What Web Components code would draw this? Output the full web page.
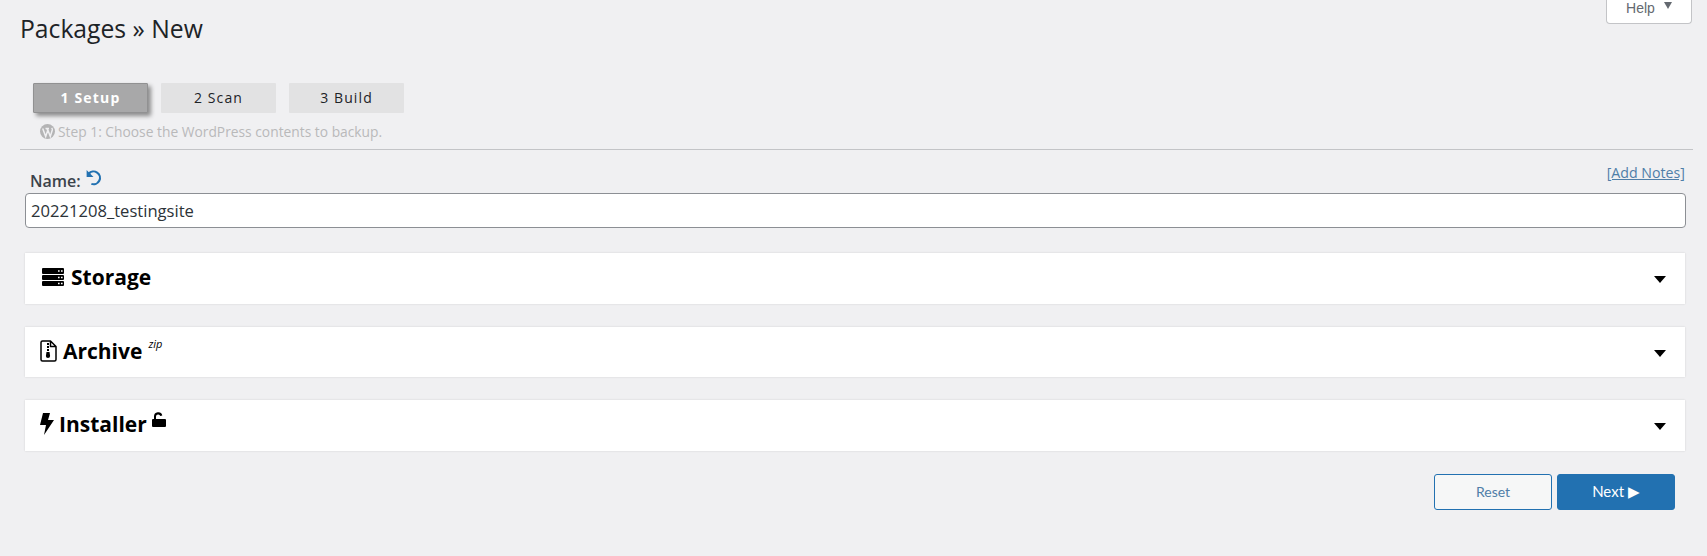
<!DOCTYPE html>
<html>
<head>
<meta charset="utf-8">
<title>Packages New</title>
<style>
  html, body { margin: 0; background: #f0f0f2; }
  body { font-family: "Open Sans", "Liberation Sans", sans-serif; color: #2c3338; }
</style>
</head>
<body>
<dup-page>
  <help-tab></help-tab>
  <page-title>Packages » New</page-title>
  <step-bar note="Step 1: Choose the WordPress contents to backup.">
    <step-item active>1 Setup</step-item>
    <step-item>2 Scan</step-item>
    <step-item>3 Build</step-item>
  </step-bar>
  <name-field value="20221208_testingsite"></name-field>
  <box-panel>
    <svg slot="icon" style="margin:0 7px 0 17px" width="22" height="20" viewBox="0 0 22 20"><path fill="#000" fill-rule="evenodd" d="M1 1h20a1 1 0 0 1 1 1v4a1 1 0 0 1-1 1H1a1 1 0 0 1-1-1V2a1 1 0 0 1 1-1zm15 2.2v1.6h1.6V3.200zm3 0v1.600h1.600V3.200zM1 8h20a1 1 0 0 1 1 1v3a1 1 0 0 1-1 1H1a1 1 0 0 1-1-1V9a1 1 0 0 1 1-1zm15 1.700v1.600h1.600V9.700zm3 0v1.600h1.600V9.700zM1 14h20a1 1 0 0 1 1 1v3a1 1 0 0 1-1 1H1a1 1 0 0 1-1-1v-3a1 1 0 0 1 1-1zm15 1.700v1.600h1.600v-1.600zm3 0v1.600h1.600v-1.600z"/></svg>
    Storage
  </box-panel>
  <box-panel>
    <svg slot="icon" style="margin:0 6px 0 15px" width="17" height="22" viewBox="0 0 17 22"><path fill="none" stroke="#000" stroke-width="1.500" stroke-linejoin="round" d="M2.500 1h8l5.500 5.500V19.500a1.500 1.500 0 0 1-1.500 1.500h-12A1.500 1.500 0 0 1 1 19.500V2.500A1.500 1.500 0 0 1 2.500 1zM10.500 1v5.500H16"/><path fill="#000" d="M7 3h2v2H7zM7 6h2v2H7zM7 9h2v2H7zM6.500 12h3l.6 4a2.100 2.100 0 1 1-4.200 0z"/></svg>
    Archive <sup slot="extra">zip</sup>
  </box-panel>
  <box-panel>
    <svg slot="icon" style="margin:0 5px 0 15px" width="14" height="22" viewBox="0 0 14 22"><path fill="#000" d="M3 0h7L8 7h6L4 22l2-10H0z"/></svg>
    Installer
    <svg slot="extra" style="margin:0 0 10px 5px" width="14" height="15" viewBox="0 0 14 15"><path fill="#000" d="M1 7h1V4.500a4.200 4.200 0 0 1 8.300-1l-2 .5A2.200 2.200 0 0 0 4 4.500V7h9a1 1 0 0 1 1 1v6a1 1 0 0 1-1 1H1a1 1 0 0 1-1-1V8a1 1 0 0 1 1-1z"/></svg>
  </box-panel>
  <form-actions></form-actions>
</dup-page>

<script>
function tpl(html) {
  const t = document.createElement('template');
  t.innerHTML = html;
  return t;
}

class ShadowEl extends HTMLElement {
  constructor() {
    super();
    this.attachShadow({ mode: 'open' });
    this.shadowRoot.appendChild(this.constructor.template.content.cloneNode(true));
  }
}

class DupPage extends ShadowEl {
  static template = tpl(`
    <style>
      :host { display: block; position: relative; height: 556px; box-sizing: border-box; padding: 10px 14px 0 20px; overflow: hidden; }
    </style>
    <slot></slot>
  `);
}

class HelpTab extends ShadowEl {
  static template = tpl(`
    <style>
      :host { position: absolute; top: 0; right: 15px; box-sizing: border-box; width: 86px; height: 24px; display: flex; align-items: flex-start; justify-content: center; gap: 9px;
        background: #fff; border: 1px solid #c3c4c7; border-top: 0; border-radius: 0 0 4px 4px; color: #646970; font: 14px/16px "Liberation Sans", sans-serif; }
      i { width: 0; height: 0; border: 4.500px solid transparent; border-top: 7px solid #646970; border-bottom: 0; margin-top: 2px; }
    </style>
    <span>Help</span><i></i>
  `);
}

class PageTitle extends ShadowEl {
  static template = tpl(`
    <style>
      :host { display: block; font-size: 24.700px; line-height: 38px; color: #1d2327; }
    </style>
    <slot></slot>
  `);
}

class StepBar extends ShadowEl {
  static template = tpl(`
    <style>
      :host { display: block; margin-top: 35px; border-bottom: 1px solid #c3c4c7; height: 67px; padding-left: 13px; box-sizing: border-box; }
      .steps { display: flex; gap: 13px; }
      .note { display: flex; align-items: center; gap: 3px; margin: 0 0 0 7px; height: 36px; font-size: 13.800px; color: #b9b9ba; }
    </style>
    <div class="steps"><slot></slot></div>
    <div class="note">
      <svg width="15" height="15" viewBox="0 0 15 15"><circle cx="7.500" cy="7.500" r="7.500" fill="#b4b4b5"/><path fill="none" stroke="#f0f0f2" stroke-width="1.500" d="M2.700 4.500l3 8 2-6-1-2.500M5.500 4.500h3.500M7.300 4.500l3 8 2-6.500c.2-.8-.2-1.500-.7-2"/></svg>
      <span class="text"></span>
    </div>
  `);
  connectedCallback() {
    this.shadowRoot.querySelector('.text').textContent = this.getAttribute('note');
  }
}

class StepItem extends ShadowEl {
  static template = tpl(`
    <style>
      :host { display: flex; align-items: center; justify-content: center; box-sizing: border-box; width: 115px; height: 30px; padding-bottom: 1px;
        background: #e2e2e3; color: #1d2327; font-size: 14px; letter-spacing: 1.100px; border-radius: 1px; }
      :host([active]) { background: #a8a8a9; color: #fff; font-weight: 700; letter-spacing: 1.200px; box-shadow: 3px 3px 4px #8c8c8c; border: 1px solid #919192; }
    </style>
    <slot></slot>
  `);
}

class NameField extends ShadowEl {
  static template = tpl(`
    <style>
      :host { display: block; margin: 19px 7px 25px 5px; }
      .head { display: flex; align-items: flex-end; height: 24px; padding-left: 5px; }
      label { font-size: 16px; font-weight: 600; color: #3c434a; line-height: 22px; margin-bottom: 1px; }
      svg { margin: 0 0 7px 4px; }
      a { margin-left: auto; margin-right: 1px; font-size: 14.200px; color: #4f7ea8; text-decoration: underline; margin-bottom: 11px; line-height: 18px; }
      input { display: block; box-sizing: border-box; width: 100%; height: 35px; border: 1px solid #8c8f94; border-radius: 4px; background: #fff; padding: 0 5px; font: 16.600px "Open Sans", sans-serif; color: #2c3338; outline: 0; }
    </style>
    <div class="head">
      <label>Name:</label>
      <svg width="17" height="17" viewBox="0 0 16 16"><path fill="none" stroke="#2271b1" stroke-width="2" d="M3.500 4.500A6 6 0 1 1 6 14"/><path fill="#2271b1" d="M1.500 1v6.500H8z"/></svg>
      <a href="#">[Add Notes]</a>
    </div>
    <input type="text">
  `);
  connectedCallback() {
    this.shadowRoot.querySelector('input').setAttribute('value', this.getAttribute('value'));
  }
}

class BoxPanel extends ShadowEl {
  static template = tpl(`
    <style>
      :host { display: flex; align-items: center; box-sizing: border-box; height: 50.500px; margin: 23px 8px 23px 5px; padding-bottom: 2px; background: #fff;
        box-shadow: 0 0 2px rgba(0,0,0,.13); font-size: 21px; font-weight: 700; color: #000; }
      .end { margin: 5px 19px 0 auto; width: 0; height: 0; border: 6.500px solid transparent; border-top: 7px solid #000; border-bottom: 0; }
      ::slotted(sup) { font-size: 11px; font-weight: 400; font-style: italic; margin: 0 0 14px 6px; line-height: 1; }
    </style>
    <slot name="icon"></slot><span><slot></slot></span><slot name="extra"></slot><i class="end"></i>
  `);
}

class FormActions extends ShadowEl {
  static template = tpl(`
    <style>
      :host { display: flex; justify-content: flex-end; gap: 5px; margin: 22.500px 18px 0 0; }
      button { box-sizing: border-box; width: 118px; height: 36px; border-radius: 3px; font: 14px Lato, sans-serif; padding: 0; }
      .reset { background: #f6f7f7; border: 1px solid #2271b1; color: #4f7ea8; }
      .next { background: #2271b1; border: 1px solid #2271b1; color: #fff; font-size: 15px; }
    </style>
    <button class="reset">Reset</button>
    <button class="next">Next ▶</button>
  `);
}

customElements.define('dup-page', DupPage);
customElements.define('help-tab', HelpTab);
customElements.define('page-title', PageTitle);
customElements.define('step-bar', StepBar);
customElements.define('step-item', StepItem);
customElements.define('name-field', NameField);
customElements.define('box-panel', BoxPanel);
customElements.define('form-actions', FormActions);
</script>
</body>
</html>
